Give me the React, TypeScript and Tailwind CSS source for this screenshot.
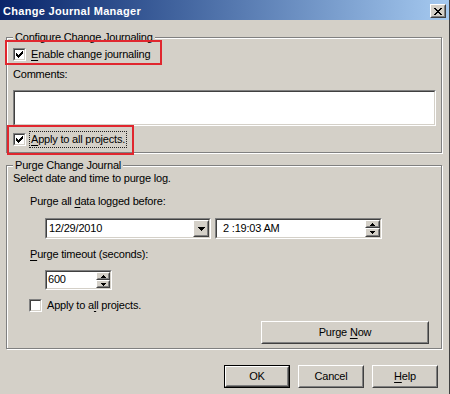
import React from "react";

type P = { className?: string; inner?: string; children?: React.ReactNode };

function Sunken({ className = "", inner = "", children }: P) {
  return (
    <div className={`border border-t-[#808080] border-l-[#808080] border-b-white border-r-white ${className}`}>
      <div className={`w-full h-full border border-t-[#404040] border-l-[#404040] border-b-[#d4d0c8] border-r-[#d4d0c8] ${inner}`}>
        {children}
      </div>
    </div>
  );
}

function Raised({ className = "", inner = "", children }: P) {
  return (
    <div className={`border border-t-white border-l-white border-b-[#404040] border-r-[#404040] bg-[#d4d0c8] ${className}`}>
      <div className={`w-full h-full border border-t-[#d4d0c8] border-l-[#d4d0c8] border-b-[#808080] border-r-[#808080] flex items-center justify-center ${inner}`}>
        {children}
      </div>
    </div>
  );
}

function CheckBox({ checked }: { checked?: boolean }) {
  return (
    <Sunken className="w-[13px] h-[13px] shrink-0" inner="bg-white">
      {checked && (
        <svg width="9" height="9" viewBox="0 0 9 9" shapeRendering="crispEdges" className="block">
          <path
            fill="#000"
            d="M7 1h1v1H7z M6 2h2v1H6z M1 3h1v1H1z M5 3h3v1H5z M1 4h2v1H1z M4 4h3v1H4z M1 5h5v1H1z M2 6h3v1H2z M3 7h1v1H3z"
          />
        </svg>
      )}
    </Sunken>
  );
}

function CheckRow({ checked, focus, className = "", children }: { checked?: boolean; focus?: boolean; className?: string; children?: React.ReactNode }) {
  return (
    <div className={`flex items-center gap-[3px] h-[17px] ${className}`}>
      <CheckBox checked={checked} />
      <span className={`px-[1px] py-[1px] border ${focus ? "border-dotted border-[#202020]" : "border-transparent"}`}>{children}</span>
    </div>
  );
}

function Down() {
  return (
    <svg width="7" height="4" viewBox="0 0 7 4" shapeRendering="crispEdges" className="block">
      <path fill="#000" d="M0 0h7v1H0z M1 1h5v1H1z M2 2h3v1H2z M3 3h1v1H3z" />
    </svg>
  );
}

function TinyUp() {
  return (
    <svg width="5" height="3" viewBox="0 0 5 3" shapeRendering="crispEdges" className="block">
      <path fill="#000" d="M2 0h1v1H2z M1 1h3v1H1z M0 2h5v1H0z" />
    </svg>
  );
}

function TinyDown() {
  return (
    <svg width="5" height="3" viewBox="0 0 5 3" shapeRendering="crispEdges" className="block">
      <path fill="#000" d="M0 0h5v1H0z M1 1h3v1H1z M2 2h1v1H2z" />
    </svg>
  );
}

function XIcon() {
  return (
    <svg width="8" height="7" viewBox="0 0 8 7" shapeRendering="crispEdges" className="block">
      <path
        fill="#000"
        d="M0 0h2v1H0z M6 0h2v1H6z M1 1h2v1H1z M5 1h2v1H5z M2 2h4v1H2z M3 3h2v1H3z M2 4h4v1H2z M1 5h2v1H1z M5 5h2v1H5z M0 6h2v1H0z M6 6h2v1H6z"
      />
    </svg>
  );
}

const U = ({ children }: { children: React.ReactNode }) => (
  <span className="underline decoration-1 underline-offset-[2px]">{children}</span>
);

export default function App() {
  return (
    <div className="relative w-[450px] h-[394px] overflow-hidden bg-[#d4d0c8] text-black text-[11px] leading-[13px] tracking-[-0.2px] font-['Liberation_Sans',Arial,sans-serif] border-r border-r-[#404040]">
      {/* title bar */}
      <div className="h-[20px] flex items-start justify-between bg-linear-to-r from-[#0a246a] to-[#a6caf0] pl-[3px] pr-[3px]">
        <span className="mt-[5px] text-white font-bold tracking-[0.3px]">Change Journal Manager</span>
        <Raised className="mt-[4px] w-[16px] h-[14px]">
          <XIcon />
        </Raised>
      </div>

      {/* Configure group */}
      <fieldset className="mt-[11px] ml-[6px] w-[436px] min-w-0 border border-[#808080] shadow-[inset_1px_1px_0_#fff,1px_1px_0_#fff] pl-[6px] pr-[5px] pt-[2px] pb-[4px]">
        <legend className="px-[2px] bg-[#d4d0c8]">Configure Change Journaling</legend>
        <CheckRow checked>
          <U>E</U>nable change journaling
        </CheckRow>
        <div className="mt-[5px]">Comments:</div>
        <Sunken className="mt-[9px] h-[36px] w-full" inner="bg-white" />
        <CheckRow checked focus className="mt-[5px]">
          <U>A</U>pply to all projects.
        </CheckRow>
      </fieldset>

      {/* Purge group */}
      <fieldset className="mt-[6px] ml-[6px] w-[436px] min-w-0 border border-[#808080] shadow-[inset_1px_1px_0_#fff,1px_1px_0_#fff] pl-[6px] pr-[5px] pt-0 pb-[4px]">
        <legend className="px-[2px] bg-[#d4d0c8]">Purge Change Journal</legend>
        <div>Select date and time to purge log.</div>
        <div className="mt-[10px] ml-[17px]">
          Purge all <U>d</U>ata logged before:
        </div>
        <div className="mt-[10px] ml-[32px] flex gap-[4px]">
          <Sunken className="w-[166px] h-[21px]" inner="bg-white flex items-center justify-between">
            <span className="pl-[2px]">12/29/2010</span>
            <Raised className="w-[16px] h-[17px]">
              <Down />
            </Raised>
          </Sunken>
          <Sunken className="w-[167px] h-[21px]" inner="bg-white flex items-center justify-between">
            <span className="pl-[6px]">2 :19:03 AM</span>
            <div className="flex flex-col w-[15px] h-full">
              <Raised className="h-[8px]">
                <TinyUp />
              </Raised>
              <Raised className="h-[9px]">
                <TinyDown />
              </Raised>
            </div>
          </Sunken>
        </div>
        <div className="mt-[9px] ml-[17px]">
          <U>P</U>urge timeout (seconds):
        </div>
        <Sunken className="mt-[9px] ml-[32px] w-[67px] h-[20px]" inner="bg-white flex">
          <span className="flex-1 pl-[1px] pt-[1px]">600</span>
          <div className="flex flex-col w-[14px] h-full">
            <Raised className="h-[8px]">
              <TinyUp />
            </Raised>
            <Raised className="h-[8px]">
              <TinyDown />
            </Raised>
          </div>
        </Sunken>
        <CheckRow className="mt-[7px] ml-[16px]">
          Apply to a<U>l</U>l projects.
        </CheckRow>
        <div className="mt-[7px] flex justify-end pr-[7px]">
          <Raised className="w-[168px] h-[23px]">
            <span>
              Purge <U>N</U>ow
            </span>
          </Raised>
        </div>
      </fieldset>

      {/* dialog buttons */}
      <div className="mt-[16px] flex justify-end gap-[8px] pr-[11px]">
        <div className="w-[66px] h-[23px] border border-black">
          <Raised className="w-full h-full">OK</Raised>
        </div>
        <Raised className="w-[66px] h-[23px]">Cancel</Raised>
        <Raised className="w-[66px] h-[23px]">
          <span>
            <U>H</U>elp
          </span>
        </Raised>
      </div>

      {/* red annotation boxes */}
      <div className="absolute left-[5px] top-[40px] w-[157px] h-[25px] border-2 border-[#e0262e]" />
      <div className="absolute left-[7px] top-[125px] w-[127px] h-[30px] border-2 border-[#e0262e]" />
    </div>
  );
}
